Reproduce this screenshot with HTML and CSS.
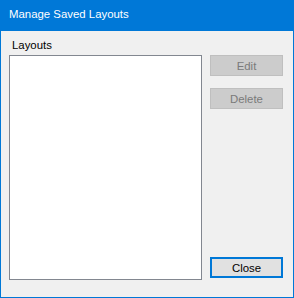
FILE: index.html
```html
<!DOCTYPE html>
<html lang="en">
<head>
    <meta charset="UTF-8">
    <title>Manage Saved Layouts</title>
    <link rel="stylesheet" href="styles.css">
</head>
<body>
    <div class="window">
        <div class="titlebar">Manage Saved Layouts</div>
        <div class="content">
            <div class="label">Layouts</div>
            <div class="row">
                <div class="listbox"></div>
                <div class="side">
                    <button class="button" disabled>Edit</button>
                    <button class="button" disabled>Delete</button>
                    <button class="button default">Close</button>
                </div>
            </div>
        </div>
    </div>
</body>
</html>
```

FILE: styles.css
```css
* {
    margin: 0;
    padding: 0;
    box-sizing: border-box;
    font-family: 'Liberation Sans', Arial, sans-serif;
}

body {
    background-color: #f0f0f0;
}

.window {
    width: 294px;
    height: 298px;
    border: 1px solid #0078d7;
    background-color: #f0f0f0;
    display: flex;
    flex-direction: column;
}

.titlebar {
    height: 30px;
    background-color: #0078d7;
    color: #ffffff;
    font-size: 11.4px;
    line-height: 15px;
    padding: 6px 0 0 8px;
}

.content {
    flex: 1;
    padding: 7px 10px 17px 8px;
    display: flex;
    flex-direction: column;
}

.label {
    font-size: 11.4px;
    line-height: 15px;
    color: #000000;
    margin: 0 0 2px 3px;
}

.row {
    flex: 1;
    display: flex;
    gap: 8px;
}

.listbox {
    width: 193px;
    background-color: #ffffff;
    border: 1px solid #828790;
}

.side {
    width: 73px;
    display: flex;
    flex-direction: column;
    gap: 12px;
    padding-bottom: 2px;
}

.button {
    height: 21px;
    font-size: 11.4px;
    background-color: #e1e1e1;
    border: 1px solid #adadad;
    color: #000000;
}

.button:disabled {
    background-color: #cccccc;
    border-color: #bfbfbf;
    color: #7a7a7a;
}

.button.default {
    margin-top: auto;
    border: 2px solid #0078d7;
}
```
